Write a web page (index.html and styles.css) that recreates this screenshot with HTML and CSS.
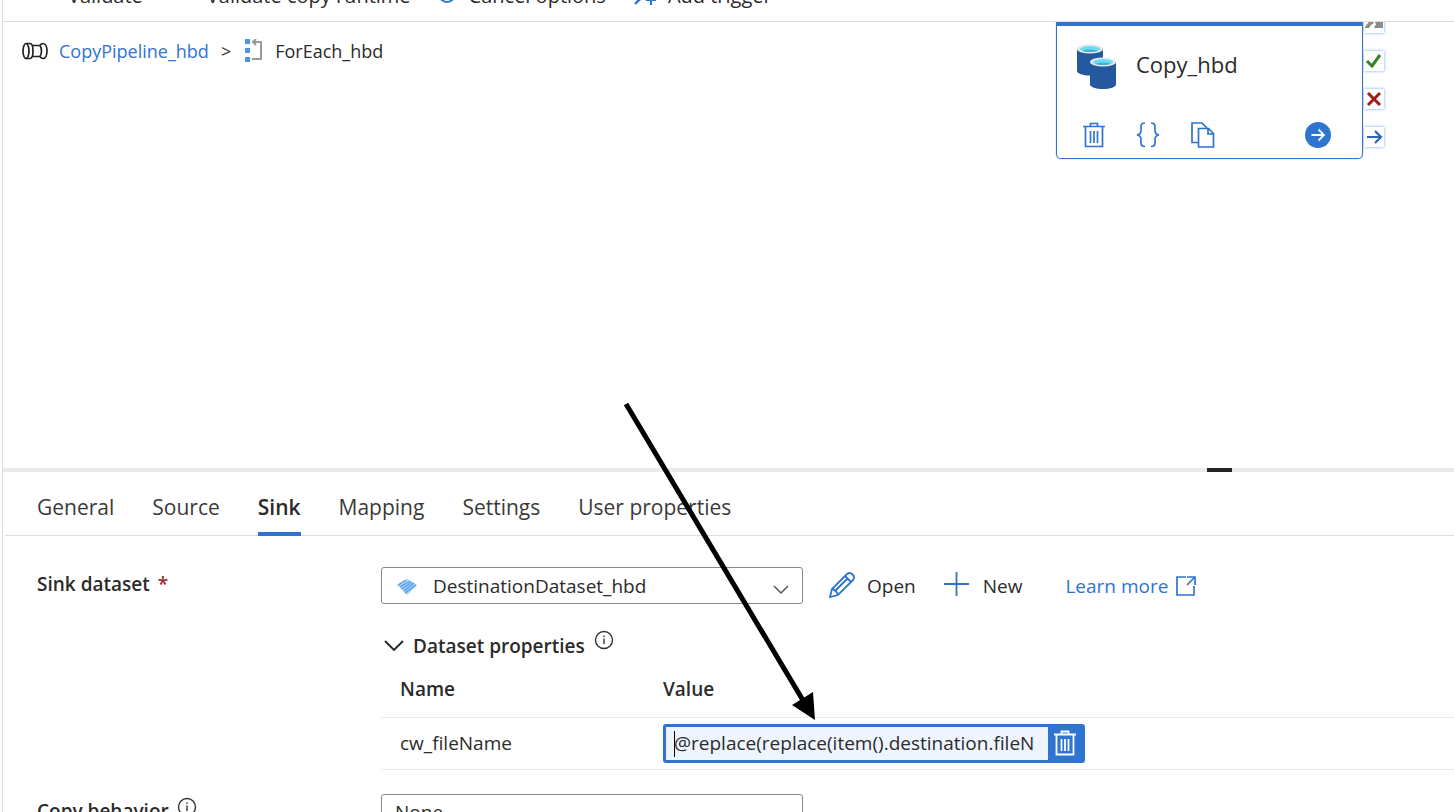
FILE: index.html
```html
<!DOCTYPE html>
<html lang="en">
  <head>
    <meta charset="UTF-8">
    <meta name="viewport" content="width=device-width, initial-scale=1.0">
    <title>ForEach_hbd</title>
    <link rel="stylesheet" href="styles.css">
  </head>
  <body>

    <div class="app">
      <div class="toolbar">
        <button type="button" class="tool tool-validate">Validate</button>
        <button type="button" class="tool tool-runtime">Validate copy runtime</button>
        <button type="button" class="tool tool-cancel">
          <svg width="20" height="20" viewBox="0 0 20 20" fill="none" stroke="#2f74d0" stroke-width="2"><circle cx="10" cy="8" r="8"/></svg>
          Cancel options
        </button>
        <button type="button" class="tool">
          <svg width="24" height="22" viewBox="0 0 24 22" fill="none" stroke="#2f74d0" stroke-width="2"><path fill="#2f74d0" d="M9 1L4 12h5L3 19l9-8H8z"/><path d="M19 10v10M14 15h10"/></svg>
          Add trigger
        </button>
      </div>

      <main class="canvas">
        <nav class="breadcrumb">
          <svg class="crumb-pipeline" width="26" height="18" viewBox="0 0 26 18" fill="none" stroke="#222" stroke-width="1.700">
            <ellipse cx="4" cy="9" rx="3" ry="7.500"/>
            <path d="M4 1.500h4c2 0 3 3 3 7.500s-1 7.500-3 7.500H4M10 3.500h8M10 14.500h8M18 3.500c1-1.500 2-2 3-2 2.500 0 4 3.500 4 7.500s-1.500 7.500-4 7.500c-1 0-2-.5-3-2M18 3.500c2 3 2 8 0 11"/>
          </svg>
          <a href="#">CopyPipeline_hbd</a>
          <span class="crumb-sep">&gt;</span>
          <svg class="crumb-loop" width="18" height="24" viewBox="0 0 18 24">
            <path fill="#4d97e2" d="M0 0h5v5H0zM0 9h5v5H0zM0 18h5v5H0z"/>
            <path fill="none" stroke="#999" stroke-width="2" d="M8 3h8v17H7M11 0L8 3l3 3"/>
          </svg>
          <span>ForEach_hbd</span>
        </nav>

        <div class="node">
          <div class="node-title">
            <svg width="40" height="46" viewBox="0 0 40 46">
              <path fill="#25599f" d="M0 5v22c0 2.500 6 4.500 13 4.500S26 29.500 26 27V5z"/>
              <ellipse cx="13" cy="5" rx="13" ry="4.500" fill="#e6e8ea"/>
              <ellipse cx="13" cy="5" rx="10" ry="3" fill="#6bdcf5"/>
              <path fill="#3db5d3" d="M5 6.500c4-1.500 12-1.500 16 0-3 2-13 2-16 0z"/>
              <path fill="#25599f" d="M13 18v22.500c0 2.500 6 4.500 13 4.500s13-2 13-4.500V18z"/>
              <ellipse cx="26" cy="18" rx="13" ry="4.500" fill="#e6e8ea"/>
              <ellipse cx="26" cy="18" rx="10" ry="3" fill="#6bdcf5"/>
              <path fill="#3db5d3" d="M18 19.500c4-1.500 12-1.500 16 0-3 2-13 2-16 0z"/>
            </svg>
            <span>Copy_hbd</span>
          </div>
          <div class="node-actions">
            <button type="button" aria-label="Delete">
              <svg width="22" height="26" viewBox="0 0 22 26" fill="none" stroke="#2f74d0" stroke-width="1.700"><path d="M0 4.500h22M7.500 4V1.500h7V4M2.500 5v19.500h17V5M7.500 9v12M11 9v12M14.500 9v12"/></svg>
            </button>
            <button type="button" aria-label="Code">
              <svg width="24" height="26" viewBox="0 0 24 26" fill="none" stroke="#2f74d0" stroke-width="1.700"><path d="M9 1C6 1 5 2 5 4.500V9c0 2.500-1 3.500-4 4 3 .5 4 1.500 4 4v4c0 2.500 1 3.500 4 3.500M15 1c3 0 4 1 4 3.500V9c0 2.500 1 3.500 4 4-3 .5-4 1.500-4 4v4c0 2.500-1 3.500-4 3.500"/></svg>
            </button>
            <button type="button" aria-label="Clone">
              <svg width="24" height="26" viewBox="0 0 24 26" fill="none" stroke="#2f74d0" stroke-width="1.700"><path d="M7 20.500H1V1h10l5 5M7.500 6.500h10l5 5v13.500h-15zM17 6.500V12h5.500"/></svg>
            </button>
            <button type="button" class="node-go" aria-label="Go to">
              <svg width="26" height="26" viewBox="0 0 26 26"><circle cx="13" cy="13" r="13" fill="#2f74d0"/><path fill="none" stroke="#fff" stroke-width="1.800" d="M6.500 13h12.500M13.500 7.500L19 13l-5.500 5.500"/></svg>
            </button>
          </div>
        </div>

        <div class="ports">
          <span class="port"><svg width="20" height="20" viewBox="0 0 20 20"><path fill="#8c8c8c" d="M1 14l5-7 4 3-3 2-2 3H1zM9 5l3 6-2 4h9V4l-3 4z"/></svg></span>
          <span class="port"><svg width="20" height="20" viewBox="0 0 20 20" fill="none" stroke="#37812a" stroke-width="3"><path d="M3 10l5 5 8-11"/></svg></span>
          <span class="port"><svg width="20" height="20" viewBox="0 0 20 20" fill="none" stroke="#a01c17" stroke-width="3"><path d="M4 4l12 12M16 4L4 16"/></svg></span>
          <span class="port"><svg width="20" height="20" viewBox="0 0 20 20" fill="none" stroke="#2c66b8" stroke-width="2.200"><path d="M3 10h13M11 4l6 6-6 6"/></svg></span>
        </div>
      </main>

      <div class="splitter"><span class="splitter-grip"></span></div>

      <section class="panel">
        <div class="tabs" role="tablist">
          <button type="button" role="tab" class="tab">General</button>
          <button type="button" role="tab" class="tab">Source</button>
          <button type="button" role="tab" class="tab active" aria-selected="true">Sink</button>
          <button type="button" role="tab" class="tab">Mapping</button>
          <button type="button" role="tab" class="tab">Settings</button>
          <button type="button" role="tab" class="tab">User properties</button>
        </div>

        <form class="settings">
          <div class="row">
            <label class="row-label" for="sink-dataset">Sink dataset <span class="required">*</span></label>
            <div class="row-field">
              <div class="dataset">
                <div class="dropdown has-icon">
                  <svg class="dropdown-icon" width="20" height="16" viewBox="0 0 20 16">
                    <path fill="#a9d1f8" d="M10 0l10 6-10 10L0 6z"/>
                    <path fill="none" stroke="#4e9ced" stroke-width="1.200" d="M1 6l8-5M3 8l10-6M5 10l10-7M7 12l10-8M8 14l11-8"/>
                  </svg>
                  <select id="sink-dataset">
                    <option>DestinationDataset_hbd</option>
                  </select>
                  <svg class="dropdown-arrow" width="16" height="10" viewBox="0 0 16 10" fill="none" stroke="#555" stroke-width="1.500"><path d="M1 1l7 7 7-7"/></svg>
                </div>
                <button type="button" class="action action-open">
                  <svg width="26" height="28" viewBox="0 0 26 28" fill="none" stroke="#2f74d0" stroke-width="1.800"><path d="M1 25l2-8L18 2c2-1.500 4-1 5.500.5S26 6 24 8L9 23zM16 4l6 6M3 17c3 .5 5 3 6 6M6 19L19 6"/></svg>
                  Open
                </button>
                <button type="button" class="action action-new">
                  <svg width="25" height="28" viewBox="0 0 25 28" fill="none" stroke="#2f74d0" stroke-width="1.800"><path d="M12.500 0v24M0 12h25"/></svg>
                  New
                </button>
                <a href="#" class="learn-more">
                  Learn more
                  <svg width="20" height="20" viewBox="0 0 20 20" fill="none" stroke="#2f74d0" stroke-width="1.700"><path d="M10 1H1v18h17v-9M11 1h8v8M19 1l-8 8"/></svg>
                </a>
              </div>

              <button type="button" class="group-toggle">
                <svg width="20" height="12" viewBox="0 0 20 12" fill="none" stroke="#222" stroke-width="1.800"><path d="M1 1l9 9 9-9"/></svg>
                Dataset properties
                <svg class="info" width="20" height="20" viewBox="0 0 20 20" fill="none" stroke="#333" stroke-width="1.400"><circle cx="10" cy="10" r="8.500"/><path d="M10 8.500V14M10 5.500V7"/></svg>
              </button>

              <table class="params">
                <thead>
                  <tr>
                    <th>Name</th>
                    <th>Value</th>
                  </tr>
                </thead>
                <tbody>
                  <tr>
                    <td><label for="cw-filename">cw_fileName</label></td>
                    <td>
                      <div class="expression">
                        <span class="caret"></span>
                        <input type="text" id="cw-filename" value="@replace(replace(item().destination.fileN">
                        <button type="button" aria-label="Delete value">
                          <svg width="22" height="26" viewBox="0 0 22 26" fill="none" stroke="#fff" stroke-width="1.800"><path d="M0 4.500h22M7.500 4V1.500h7V4M2.500 5v19.500h17V5M7.500 9v12M11 9v12M14.500 9v12"/></svg>
                        </button>
                      </div>
                    </td>
                  </tr>
                </tbody>
              </table>
            </div>
          </div>

          <div class="row">
            <label class="row-label" for="copy-behavior">
              Copy behavior
              <svg class="info" width="20" height="20" viewBox="0 0 20 20" fill="none" stroke="#333" stroke-width="1.400"><circle cx="10" cy="10" r="8.500"/><path d="M10 8.500V14M10 5.500V7"/></svg>
            </label>
            <div class="row-field">
              <div class="dropdown">
                <select id="copy-behavior">
                  <option>None</option>
                </select>
              </div>
            </div>
          </div>
        </form>
      </section>
    </div>

    <!-- Annotation arrow -->
    <svg class="annotation" width="200" height="326" viewBox="0 0 200 326">
      <path stroke="#000" stroke-width="5" d="M6 4l178 298"/>
      <path d="M195 320l-2-28-21 13z"/>
    </svg>

  </body>
</html>
```
FILE: styles.css
```css
/* Base */
* {
  box-sizing: border-box;
}

body {
  font-family: 'Open Sans', 'Noto Sans', sans-serif;
  font-size: 19px;
  line-height: 28px;
  color: #2b2b2b;
  background-color: #fff;
  margin: 0;
  overflow: hidden;
}

button, select, input {
  font: inherit;
  color: inherit;
  margin: 0;
}

button {
  display: flex;
  align-items: center;
  padding: 0;
  border: none;
  background: none;
  white-space: nowrap;
  cursor: pointer;
}

svg {
  flex: none;
}

a {
  color: #2f74d0;
  text-decoration: none;
}

/* Layout */
.app {
  display: flex;
  flex-direction: column;
  height: 100vh;
  margin-left: 2px;
  border-left: 1px solid #ddd;
}

.toolbar {
  display: flex;
  align-items: flex-end;
  flex: none;
  height: 22px;
  padding: 0 0 11px 65px;
  border-bottom: 1px solid #ddd;
  font-size: 20px;
}

.tool {
  gap: 12px;
  margin-right: 26px;
}

.tool-validate {
  margin-right: 64px;
}

/* Canvas */
.canvas {
  position: relative;
  flex: 1;
  min-height: 0;
  overflow: hidden;
}

.breadcrumb {
  display: flex;
  align-items: center;
  padding: 15px 0 0 19px;
  font-size: 18px;
}

.crumb-pipeline {
  margin-right: 11px;
}

.crumb-sep {
  margin: 0 14px 0 12px;
  font-size: 18px;
}

.crumb-loop {
  margin-right: 12px;
}

.node {
  position: absolute;
  top: 0;
  left: 1053px;
  width: 307px;
  height: 137px;
  padding: 18px 20px 0;
  border: 1px solid #2f74d0;
  border-top-width: 4px;
  border-radius: 0 0 5px 5px;
  box-shadow: 0 0 1px #2f74d0;
}

.node-title {
  display: flex;
  align-items: flex-start;
  gap: 19px;
  font-size: 22px;
  line-height: 40px;
}

.node-actions {
  display: flex;
  align-items: center;
  gap: 31px;
  padding: 32px 11px 0 6px;
}

.node-go {
  margin-left: auto;
}

.ports {
  position: absolute;
  top: -9px;
  left: 1361px;
  display: flex;
  flex-direction: column;
  gap: 18px;
}

.port {
  display: flex;
  background-color: #fff;
  box-shadow: 0 0 3px #6fa5e8;
}

.splitter {
  flex: none;
  display: flex;
  justify-content: flex-end;
  height: 4px;
  padding-right: 222px;
  background-color: #eaeaea;
}

.splitter-grip {
  width: 25px;
  background-color: #252423;
}

/* Properties panel */
.panel {
  flex: 0 0 340px;
  overflow: hidden;
}

.tabs {
  display: flex;
  gap: 38px;
  height: 64px;
  margin-left: 2px;
  padding-left: 32px;
  border-bottom: 1px solid #ddd;
}

.tab {
  height: 64px;
  padding-top: 10px;
  border-bottom: 4px solid transparent;
  font-size: 21px;
  color: #3b3a39;
}

.tab.active {
  border-color: #2f74d0;
  font-weight: 600;
  color: #2b2b2b;
}

.settings {
  padding: 31px 0 0 34px;
}

.row {
  display: grid;
  grid-template-columns: 344px 1fr;
  margin-bottom: 24px;
}

.row-label {
  display: flex;
  gap: 8px;
  padding-top: 3px;
  font-weight: 600;
}

.required {
  color: #a4262c;
}

.dataset {
  display: flex;
  align-items: center;
}

.dropdown {
  position: relative;
  width: 422px;
}

.dropdown select {
  display: block;
  width: 100%;
  height: 37px;
  padding: 0 40px 0 13px;
  border: 1px solid #8a8886;
  border-radius: 3px;
  background-color: #fff;
  appearance: none;
}

.dropdown.has-icon select {
  padding-left: 51px;
}

.dropdown-icon {
  position: absolute;
  top: 12px;
  left: 16px;
}

.dropdown-arrow {
  position: absolute;
  top: 18px;
  right: 14px;
}

.action-open {
  gap: 12px;
  margin-left: 26px;
}

.action-new {
  gap: 14px;
  margin-left: 28px;
}

.learn-more {
  display: flex;
  align-items: center;
  gap: 8px;
  margin-left: 43px;
}

.group-toggle {
  gap: 9px;
  height: 36px;
  margin-top: 24px;
  padding-left: 3px;
  font-weight: 600;
}

.group-toggle .info {
  margin-bottom: 12px;
}

/* Parameters table */
.params {
  width: 100%;
  border-collapse: collapse;
}

.params th, .params td {
  padding: 0;
  border-bottom: 1px solid #edebe9;
  text-align: left;
}

.params th {
  height: 53px;
  padding-bottom: 3px;
  font-weight: 600;
}

.params td {
  height: 52px;
}

.params th:first-child, .params td:first-child {
  width: 282px;
  padding-left: 19px;
}

.expression {
  position: relative;
  display: flex;
  width: 422px;
  height: 39px;
  border: 3px solid #2f74d0;
  border-radius: 3px;
  background-color: #2f74d0;
}

.expression input {
  flex: 1;
  min-width: 0;
  padding: 0 0 0 8px;
  border: none;
  background-color: #eff5ff;
}

.expression button {
  justify-content: center;
  width: 34px;
}

.caret {
  position: absolute;
  top: 4px;
  left: 8px;
  width: 1px;
  height: 26px;
  background-color: #000;
}

.annotation {
  position: absolute;
  top: 400px;
  left: 620px;
  pointer-events: none;
}
```
